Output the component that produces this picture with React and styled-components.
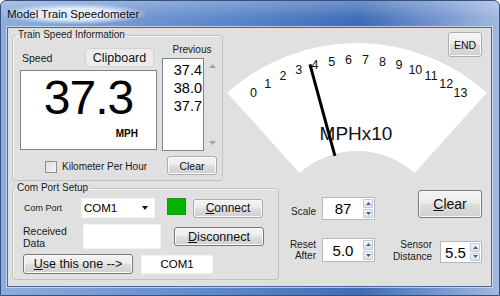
import React from 'react';
import styled, { createGlobalStyle } from 'styled-components';

const GlobalStyle = createGlobalStyle`
    html, body {
        margin: 0;
        padding: 0;
        background: #ffffff;
    }

    body {
        font-family: "Liberation Sans", Arial, sans-serif;
        color: #111;
    }
`;

const Window = styled.div`
    box-sizing: border-box;
    width: 500px;
    height: 296px;
    display: flex;
    flex-direction: column;
    border: 1px solid #35517f;
    border-radius: 6px 6px 0 0;
    overflow: hidden;
    background: linear-gradient( 90deg, #8eaedd 0%, #7397d1 25%, #5682c8 50%, #3f6cb6 72%, #7596cf 88%, #a2b9df 100% );
`;

const TitleBar = styled.div`
    height: 26px;
    flex: none;
    display: flex;
    align-items: center;
    padding-left: 3px;
    background: linear-gradient( 180deg, rgba( 255, 255, 255, .25 ), rgba( 255, 255, 255, 0 ) 70% );
`;

const TitleText = styled.span`
    font-size: 11.5px;
    padding: 4px 6px 4px 3px;
    color: #0c0c0c;
    background: radial-gradient( ellipse at center, rgba( 232, 240, 251, .95 ) 40%, rgba( 232, 240, 251, 0 ) 75% );
`;

const Client = styled.div`
    flex: 1;
    display: flex;
    flex-direction: column;
    margin: 0 7px 8px 6px;
    padding-left: 4px;
    background: #e0e0e0;
    border: 1px solid #4a6896;
    box-shadow: 0 0 0 1px rgba( 220, 232, 248, .7 );
`;

const TopRow = styled.div`
    display: flex;
    height: 153px;
`;

const BottomRow = styled.div`
    display: flex;
    flex: 1;
`;

const Group = styled.fieldset`
    box-sizing: border-box;
    width: ${ p => p.w }px;
    margin: 0;
    padding: 0;
    min-width: 0;
    border: 1px solid #c2c2c2;
    border-radius: 3px;
    box-shadow: inset 1px 1px 0 #f4f4f4;
`;

const Legend = styled.legend`
    padding: 0 2px;
    margin-left: ${ p => p.offset }px;
    font-size: 10px;
    line-height: 14px;
    color: #1a1a1a;
`;

const SpeedContent = styled.div`
    display: flex;
    padding: 2px 1px 6px 7px;
`;

const SpeedCol = styled.div`
    width: 137px;
    display: flex;
    flex-direction: column;
`;

const SpeedHeader = styled.div`
    height: 19px;
    margin-top: 4px;
    display: flex;
    align-items: center;
`;

const Label = styled.span`
    font-size: ${ p => p.fs || 10 }px;
    line-height: ${ p => p.lh || 12 }px;
    padding-left: ${ p => p.pl || 0 }px;
    text-align: ${ p => p.align || 'left' };
    color: #1a1a1a;
`;

const Button = styled.button`
    box-sizing: border-box;
    width: ${ p => p.w }px;
    height: ${ p => p.h }px;
    margin: 0 0 0 ${ p => p.ml || 0 }px;
    padding: 0;
    font-family: inherit;
    font-size: ${ p => p.fs }px;
    color: #111;
    border-radius: 3px;
    border: 1px solid ${ p => p.flat ? '#d4d4d4' : p.soft ? '#adadad' : '#7a7a7a' };
    background: ${ p => p.flat
        ? '#ececec'
        : 'linear-gradient( 180deg, #f4f4f4 0%, #ececec 45%, #dedede 52%, #d0d0d0 100% )' };
    box-shadow: inset 0 0 0 1px ${ p => p.flat ? '#ececec' : '#fafafa' };
`;

const SpeedBox = styled.div`
    box-sizing: border-box;
    height: 80px;
    margin-top: 3px;
    background: #fff;
    border: 1px solid #7f848c;
    display: flex;
    flex-direction: column;
`;

const SpeedValue = styled.div`
    margin-top: 3px;
    font-size: 48px;
    line-height: 48px;
    letter-spacing: -1px;
    text-align: center;
    color: #000;
`;

const SpeedUnit = styled.div`
    margin-top: 6px;
    padding-right: 18px;
    font-size: 10px;
    line-height: 12px;
    font-weight: bold;
    text-align: right;
    color: #000;
`;

const CheckRow = styled.div`
    height: 14px;
    margin-top: 10px;
    padding-left: 25px;
    display: flex;
    align-items: center;
    gap: 5px;
`;

const CheckBox = styled.span`
    box-sizing: border-box;
    width: 12px;
    height: 12px;
    border: 1px solid #8e8f8f;
    background: linear-gradient( 135deg, #dcdcdc, #f6f6f6 );
`;

const PrevCol = styled.div`
    width: 58px;
    margin-left: 5px;
    display: flex;
    flex-direction: column;
`;

const ListWrap = styled.div`
    height: 93px;
    margin-top: 2px;
    display: flex;
`;

const List = styled.div`
    box-sizing: border-box;
    width: 42px;
    padding: 2px 1px 0 0;
    background: #fff;
    border: 1px solid #7f848c;
`;

const ListItem = styled.div`
    font-size: 14.5px;
    line-height: 18px;
    text-align: right;
    color: #000;
`;

const ScrollBar = styled.div`
    flex: 1;
    display: flex;
    flex-direction: column;
    justify-content: space-between;
    align-items: center;
    padding: 6px 0 6px;
`;

const GaugeArea = styled.div`
    position: relative;
    flex: 1;
`;

const EndButton = styled( Button )`
    position: absolute;
    top: 4px;
    right: 9px;
`;

const ComContent = styled.div`
    display: flex;
    flex-direction: column;
    padding: 1px 0 5px 10px;
`;

const ComRow = styled.div`
    display: flex;
    align-items: center;
    height: ${ p => p.h }px;
    margin-top: ${ p => p.mt }px;
`;

const Field = styled.div`
    box-sizing: border-box;
    width: ${ p => p.w }px;
    height: ${ p => p.h }px;
    margin-left: ${ p => p.ml || 0 }px;
    display: flex;
    align-items: center;
    justify-content: ${ p => p.center ? 'center' : 'flex-start' };
    padding-left: ${ p => p.center ? 0 : 2 }px;
    background: #fff;
    border: 1px solid #f2f2f2;
    font-size: 11.5px;
    color: #000;
`;

const DropArrow = styled.span`
    margin-left: auto;
    margin-right: 6px;
    width: 0;
    height: 0;
    border-left: 3.5px solid transparent;
    border-right: 3.5px solid transparent;
    border-top: 4px solid #111;
`;

const StatusLight = styled.div`
    box-sizing: border-box;
    width: 19px;
    height: 17px;
    margin-left: 12px;
    align-self: flex-start;
    margin-top: 1px;
    background: #00b400;
    border: 1px solid #0f9a0f;
`;

const Controls = styled.div`
    flex: 1;
    display: grid;
    grid-template-columns: 31px 53px 1fr 42px;
    grid-template-rows: 30px 25px;
    column-gap: 6px;
    row-gap: 18px;
    padding: 9px 9px 0 6px;
`;

const ControlLabel = styled.div`
    font-size: 10px;
    line-height: ${ p => p.lh || 11 }px;
    text-align: right;
    padding-right: ${ p => p.pr || 0 }px;
    align-self: ${ p => p.align || 'center' };
    grid-column: ${ p => p.col };
    color: #1a1a1a;
`;

const Spin = styled.div`
    box-sizing: border-box;
    height: ${ p => p.h }px;
    display: flex;
    align-self: ${ p => p.align || 'end' };
    grid-column: ${ p => p.col };
    background: #fff;
    border: 1px solid #b5b8be;
`;

const SpinValue = styled.div`
    flex: 1;
    display: flex;
    align-items: center;
    justify-content: center;
    font-size: 15px;
    color: #000;
`;

const SpinButtons = styled.div`
    width: 10px;
    margin: 1px 1px 1px 0;
    display: flex;
    flex-direction: column;
    gap: 1px;
`;

const SpinButton = styled.div`
    flex: 1;
    display: flex;
    align-items: center;
    justify-content: center;
    background: linear-gradient( 180deg, #f4f7fb, #d9e1ec );
    border: 1px solid #c0cad8;
    border-radius: 1px;
`;

const BigClear = styled( Button )`
    grid-column: 3 / 5;
    justify-self: end;
    align-self: start;
`;

const Triangle = ( { up, color = '#9a9a9a', w = 7, h = 4 } ) => (
    <svg width={ w } height={ h } viewBox="0 0 7 4">
        <polygon points={ up ? '0,4 7,4 3.5,0' : '0,0 7,0 3.5,4' } fill={ color } />
    </svg>
);

const SpinBox = ( { value, col, h, align } ) => (
    <Spin col={ col } h={ h } align={ align }>
        <SpinValue>{ value }</SpinValue>
        <SpinButtons>
            <SpinButton><Triangle up color="#4a5f86" w={ 5 } h={ 3 } /></SpinButton>
            <SpinButton><Triangle color="#4a5f86" w={ 5 } h={ 3 } /></SpinButton>
        </SpinButtons>
    </Spin>
);

// gauge geometry, in the gauge area's own coordinates
const CX = 134;
const CY = 209;
const OUTER = 194;
const INNER = 86;
const EDGE = 42;
const rad = ( deg ) => deg * Math.PI / 180;
const pt = ( r, deg ) => [ CX + r * Math.sin( rad( deg ) ), CY - r * Math.cos( rad( deg ) ) ];

const Gauge = ( { speed } ) => {
    const [ ox1, oy1 ] = pt( OUTER, -EDGE );
    const [ ox2, oy2 ] = pt( OUTER, EDGE );
    const [ ix2, iy2 ] = pt( INNER, EDGE );
    const [ ix1, iy1 ] = pt( INNER, -EDGE );
    const start = -35.75;
    const step = 5.5;
    const needle = start + ( speed / 10 ) * step;
    const [ nx1, ny1 ] = pt( 84, needle );
    const [ nx2, ny2 ] = pt( 179, needle );

    return (
        <svg width="268" height="153" viewBox="0 0 268 153" style={ { display: 'block', overflow: 'visible' } }>
            <path
                d={ `M ${ ox1 } ${ oy1 } A ${ OUTER } ${ OUTER } 0 0 1 ${ ox2 } ${ oy2 } L ${ ix2 } ${ iy2 } A ${ INNER } ${ INNER } 0 0 0 ${ ix1 } ${ iy1 } Z` }
                fill="#ffffff"
            />
            {
                Array.from( { length: 14 } ).map( ( _, i ) => {
                    const [ x, y ] = pt( 177, start + i * step );
                    return (
                        <text key={ i } x={ x } y={ y } fontSize="12.5" textAnchor="middle" dominantBaseline="central"
                            fontFamily="Liberation Sans, Arial, sans-serif" fill="#111">
                            { i }
                        </text>
                    );
                } )
            }
            <text x={ CX - 1 } y="105" fontSize="19" textAnchor="middle" dominantBaseline="central"
                fontFamily="Liberation Sans, Arial, sans-serif" fill="#111">
                MPHx10
            </text>
            <line x1={ nx1 } y1={ ny1 } x2={ nx2 } y2={ ny2 } stroke="#000" strokeWidth="3" />
        </svg>
    );
};

const previous = [ '37.4', '38.0', '37.7' ];

export default function App() {
    return (
        <>
            <GlobalStyle />
            <Window>
                <TitleBar>
                    <TitleText>Model Train Speedometer</TitleText>
                </TitleBar>
                <Client>
                    <TopRow>
                        <Group w={ 211 }>
                            <Legend offset={ 3 }>Train Speed Information</Legend>
                            <SpeedContent>
                                <SpeedCol>
                                    <SpeedHeader>
                                        <Label pl={ 2 } fs={ 10.5 }>Speed</Label>
                                        <Button flat w={ 69 } h={ 19 } fs={ 12.5 } style={ { marginLeft: 'auto', marginRight: 3 } }>
                                            Clipboard
                                        </Button>
                                    </SpeedHeader>
                                    <SpeedBox>
                                        <SpeedValue>37.3</SpeedValue>
                                        <SpeedUnit>MPH</SpeedUnit>
                                    </SpeedBox>
                                    <CheckRow>
                                        <CheckBox />
                                        <Label>Kilometer Per Hour</Label>
                                    </CheckRow>
                                </SpeedCol>
                                <PrevCol>
                                    <Label align="center" pl={ 2 }>Previous</Label>
                                    <ListWrap>
                                        <List>
                                            { previous.map( ( v ) => <ListItem key={ v }>{ v }</ListItem> ) }
                                        </List>
                                        <ScrollBar>
                                            <Triangle up color="#a5a5a5" />
                                            <Triangle color="#a5a5a5" />
                                        </ScrollBar>
                                    </ListWrap>
                                    <Button soft w={ 50 } h={ 19 } fs={ 10.5 } ml={ 5 } style={ { marginTop: 5 } }>
                                        Clear
                                    </Button>
                                </PrevCol>
                            </SpeedContent>
                        </Group>
                        <GaugeArea>
                            <Gauge speed={ 37.3 } />
                            <EndButton soft w={ 34 } h={ 25 } fs={ 10.5 }>END</EndButton>
                        </GaugeArea>
                    </TopRow>
                    <BottomRow>
                        <Group w={ 267 } style={ { alignSelf: 'flex-start' } }>
                            <Legend offset={ 2 }>Com Port Setup</Legend>
                            <ComContent>
                                <ComRow h={ 22 } mt={ 1 }>
                                    <Label fs={ 9 } pl={ 1 } style={ { width: 57 } }>Com Port</Label>
                                    <Field w={ 74 } h={ 20 }>
                                        COM1
                                        <DropArrow />
                                    </Field>
                                    <StatusLight />
                                    <Button soft w={ 70 } h={ 19 } fs={ 12 } ml={ 7 }>
                                        <u>C</u>onnect
                                    </Button>
                                </ComRow>
                                <ComRow h={ 25 } mt={ 5 }>
                                    <Label fs={ 10.5 } style={ { width: 60 } }>Received<br />Data</Label>
                                    <Field w={ 78 } h={ 25 } />
                                    <Button w={ 90 } h={ 19 } fs={ 12.5 } ml={ 13 }>
                                        <u>D</u>isconnect
                                    </Button>
                                </ComRow>
                                <ComRow h={ 20 } mt={ 5 }>
                                    <Button w={ 110 } h={ 20 } fs={ 12.5 }>
                                        <u>U</u>se this one --&gt;
                                    </Button>
                                    <Field w={ 72 } h={ 19 } ml={ 8 } center>COM1</Field>
                                </ComRow>
                            </ComContent>
                        </Group>
                        <Controls>
                            <ControlLabel col={ 1 } lh={ 16 } align="end">Scale</ControlLabel>
                            <SpinBox value="87" col={ 2 } h={ 23 } />
                            <BigClear w={ 64 } h={ 28 } fs={ 14 }><u>C</u>lear</BigClear>
                            <ControlLabel col={ 1 } align="start" style={ { paddingTop: 1 } }>Reset<br />After</ControlLabel>
                            <SpinBox value="5.0" col={ 2 } h={ 24 } align="start" />
                            <ControlLabel col={ 3 } pr={ 2 } align="end" lh={ 12 }>Sensor<br />Distance</ControlLabel>
                            <SpinBox value="5.5" col={ 4 } h={ 22 } />
                        </Controls>
                    </BottomRow>
                </Client>
            </Window>
        </>
    );
}
